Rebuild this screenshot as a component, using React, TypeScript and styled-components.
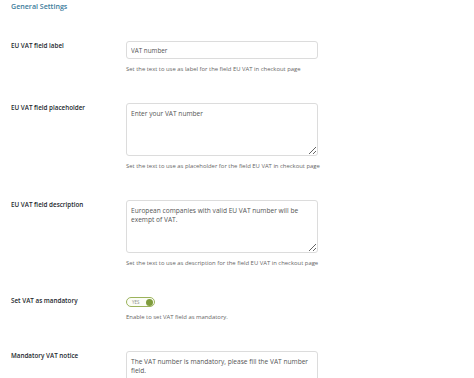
import React from 'react';
import styled, {createGlobalStyle} from "styled-components";

const GlobalStyle = createGlobalStyle`
html, body {
margin: 0;
padding: 0;
background: #fff;
}
body {
font-family: "Open Sans", "Noto Sans", sans-serif;
}
`

const Page = styled.div`
padding: 0 0 0 11px;
width: 463px;
height: 378px;
overflow: hidden;
box-sizing: border-box;
`

const Title = styled.h2`
margin: 0;
font-size: 7.1px;
line-height: 12px;
font-weight: 600;
color: #3b7c9b;
height: 26px;
`

const Row = styled.div`
display: grid;
grid-template-columns: 115px 192px;
padding: 15px 0;
`

const Label = styled.div`
font-size: 6.3px;
font-weight: 600;
color: #23282d;
line-height: 8px;
padding-top: ${p => p.$offset || 0}px;
`

const Field = styled.div`
display: flex;
flex-direction: column;
align-items: flex-start;
`

const TextInput = styled.input`
box-sizing: border-box;
width: 192px;
height: 18px;
margin: 0;
padding: 0 4px;
border: 1px solid #dcdcdc;
border-radius: 3px;
font-family: inherit;
font-size: 6.3px;
color: #555;
background: #fff;
outline: none;
`

const TextArea = styled.textarea`
box-sizing: border-box;
width: 192px;
height: 53px;
margin: 0;
padding: 5px 4px;
border: 1px solid #dcdcdc;
border-radius: 3px;
font-family: inherit;
font-size: 6.6px;
line-height: 9px;
color: #555;
background: #fff;
resize: vertical;
outline: none;
`

const Help = styled.p`
margin: 6px 0 0;
font-size: 5.9px;
line-height: 8px;
color: #666;
white-space: nowrap;
`

const Toggle = styled.span`
box-sizing: border-box;
display: inline-flex;
align-items: center;
justify-content: space-between;
width: 29px;
height: 10px;
padding: 0 1px 0 5px;
border: 1px solid #9cb35c;
border-radius: 5px;
background: #fbfdf6;
`

const ToggleText = styled.span`
font-size: 4.4px;
line-height: 5px;
color: #8a8a8a;
`

const Knob = styled.span`
width: 7px;
height: 7px;
border-radius: 50%;
background: #7f9c3c;
`

const rows = [
    {
        label: "EU VAT field label",
        kind: "input",
        value: "VAT number",
        help: "Set the text to use as label for the field EU VAT in checkout page",
    },
    {
        label: "EU VAT field placeholder",
        kind: "textarea",
        value: "Enter your VAT number",
        help: "Set the text to use as placeholder for the field EU VAT in checkout page",
    },
    {
        label: "EU VAT field description",
        kind: "textarea",
        value: "European companies with valid EU VAT number will be exempt of VAT.",
        help: "Set the text to use as description for the field EU VAT in checkout page",
    },
    {
        label: "Set VAT as mandatory",
        kind: "toggle",
        help: "Enable to set VAT field as mandatory.",
    },
    {
        label: "Mandatory VAT notice",
        kind: "textarea",
        value: "The VAT number is mandatory, please fill the VAT number field.",
    },
];

const App = () => {
    return (
        <Page>
            <GlobalStyle/>
            <Title>General Settings</Title>
            {rows.map(row => (
                <Row key={row.label}>
                    <Label $offset={row.kind === "toggle" ? 0 : 1}>{row.label}</Label>
                    <Field>
                        {row.kind === "input" && <TextInput defaultValue={row.value} readOnly/>}
                        {row.kind === "textarea" && <TextArea defaultValue={row.value} readOnly/>}
                        {row.kind === "toggle" && (
                            <Toggle>
                                <ToggleText>YES</ToggleText>
                                <Knob/>
                            </Toggle>
                        )}
                        {row.help && <Help>{row.help}</Help>}
                    </Field>
                </Row>
            ))}
        </Page>
    )
}

export default App
